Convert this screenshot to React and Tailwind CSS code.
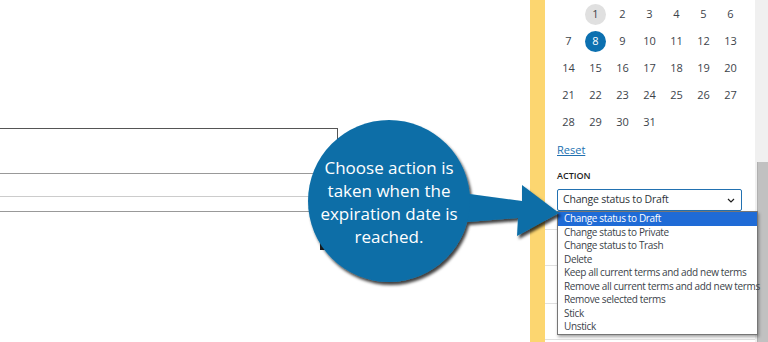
import React from 'react';

const weeks = [
  [null, 1, 2, 3, 4, 5, 6],
  [7, 8, 9, 10, 11, 12, 13],
  [14, 15, 16, 17, 18, 19, 20],
  [21, 22, 23, 24, 25, 26, 27],
  [28, 29, 30, 31, null, null, null],
];

const actions = [
  'Change status to Draft',
  'Change status to Private',
  'Change status to Trash',
  'Delete',
  'Keep all current terms and add new terms',
  'Remove all current terms and add new terms',
  'Remove selected terms',
  'Stick',
  'Unstick',
];

function Day({ value }) {
  if (!value) return <div />;
  let cls = 'text-[#3c434a]';
  if (value === 1) cls = 'bg-[#e0e0e0] text-[#3c434a]';
  if (value === 8) cls = 'bg-[#0c70b0] text-white';
  return (
    <div className="flex items-center justify-center">
      <span className={`w-[21px] h-[21px] rounded-full flex items-center justify-center text-[11px] ${cls}`}>
        {value}
      </span>
    </div>
  );
}

function Callout() {
  return (
    <svg className="absolute left-0 top-0 pointer-events-none z-20" width="768" height="342">
      <defs>
        <filter id="shadow" x="-20%" y="-20%" width="140%" height="140%">
          <feDropShadow dx="2" dy="3" stdDeviation="1.6" floodColor="#000" floodOpacity="0.75" />
        </filter>
      </defs>
      <g filter="url(#shadow)" fill="#0a6ea7">
        <polygon points="455,192 522,201 522,185 559,213 517,236 518,218 455,223" />
        <circle cx="389" cy="201" r="81" />
      </g>
      <g fill="#fff" fontFamily="'Open Sans', sans-serif" fontSize="17" textAnchor="middle">
        <text x="389" y="174">Choose action is</text>
        <text x="389" y="197">taken when the</text>
        <text x="389" y="220">expiration date is</text>
        <text x="389" y="243">reached.</text>
      </g>
    </svg>
  );
}

export default function App() {
  return (
    <div className="relative w-[768px] h-[342px] flex overflow-hidden bg-white" style={{ fontFamily: "'Open Sans', sans-serif" }}>
      {/* Editor area */}
      <div className="w-[530px] flex flex-col pt-[128px]">
        <div className="w-[338px] h-[45px] border-t border-r border-[#555]" />
        <div className="w-[338px] h-[23px] border-t border-[#999]" />
        <div className="w-[338px] h-[15px] border-t border-[#ccc]" />
        <div className="w-[338px] border-t border-[#999]" />
        <div className="ml-[320px] mt-[26px] w-[20px] h-[12px] bg-[#1e1e1e]" />
      </div>

      {/* Yellow accent */}
      <div className="w-[15px] bg-[#fcd670]" />

      {/* Sidebar panel */}
      <div className="relative w-[210px] flex flex-col bg-white z-10">
        <div className="pl-[10px] pt-[1px] grid grid-cols-[repeat(7,27px)] auto-rows-[27px]">
          {weeks.flat().map((d, i) => (
            <Day key={i} value={d} />
          ))}
        </div>

        <a className="ml-[12px] mt-[7px] text-[11px] leading-[14px] text-[#2271b1] underline w-fit">Reset</a>

        <div className="ml-[12px] mt-[13px] text-[9px] leading-[12px] font-semibold text-[#1e1e1e] uppercase">Action</div>

        <div className="ml-[12px] mt-[7px] w-[185px] h-[22px] border border-[#2271b1] rounded-[2px] flex items-center justify-between pl-[5px] pr-[6px]">
          <span className="text-[10.5px] tracking-[-0.2px] text-[#2c3338]">Change status to Draft</span>
          <svg width="8" height="5" viewBox="0 0 8 5">
            <polyline points="1,1 4,4 7,1" fill="none" stroke="#1e1e1e" strokeWidth="1.2" />
          </svg>
        </div>

        <div className="mt-[18px] h-[36px] border-t border-[#e0e0e0]" />
        <div className="h-[38px] border-t border-[#e0e0e0]" />
        <div className="h-[36px] border-t border-[#e0e0e0]" />
        <div className="border-t border-[#e0e0e0]" />

        {/* Open dropdown list */}
        <ul className="absolute left-[12px] top-[211px] w-[201px] bg-white border border-[#767676] shadow-[1px_2px_3px_rgba(0,0,0,0.35)]">
          {actions.map((a, i) => (
            <li
              key={a}
              className={`h-[13.5px] px-[6px] flex items-center text-[10px] tracking-[-0.35px] whitespace-nowrap ${i === 0 ? 'bg-[#1f6bd6] text-white' : 'text-[#3c434a]'}`}
            >
              {a}
            </li>
          ))}
        </ul>
      </div>

      {/* Scroll gutter */}
      <div className="w-[13px] flex flex-col bg-[#f0f0f0] pt-[162px]">
        <div className="ml-[2px] flex-1 bg-[#c1c1c1] border-l border-[#b0b0b0]" />
      </div>

      <Callout />
    </div>
  );
}
